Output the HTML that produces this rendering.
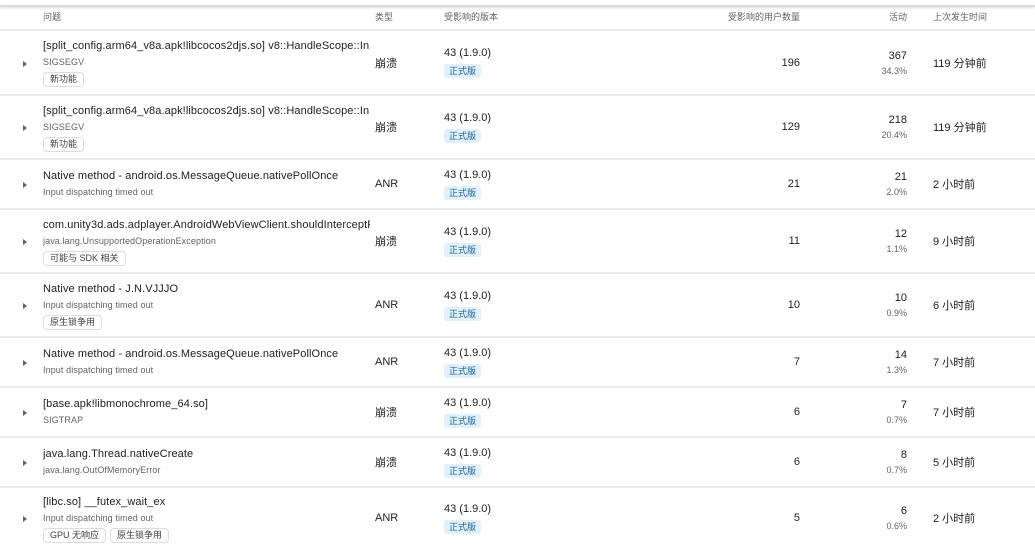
<!DOCTYPE html>
<html><head><meta charset="utf-8"><style>
*{margin:0;padding:0;box-sizing:border-box}
body{width:1035px;height:546px;overflow:hidden;background:#fff;font-family:"Liberation Sans","Noto Sans CJK SC",sans-serif;color:#202124;position:relative}
.top{position:absolute;left:0;right:0;top:5px;height:2px;background:#dcdcdc;box-shadow:0 1px 2px rgba(0,0,0,.15)}
.hd{position:absolute;top:7px;height:23px;font-size:9px;color:#5f6368;line-height:20px}
.row{position:absolute;left:0;width:1035px;border-top:2px solid #ebebeb}
.c{position:absolute;top:0;bottom:0;display:flex;flex-direction:column;justify-content:center}
.tri{left:22px;width:6px;align-items:center}
.tri span{width:0;height:0;border-left:4px solid #5f6368;border-top:3.5px solid transparent;border-bottom:3.5px solid transparent;margin-top:2px}
.iss{left:43px;width:327px;overflow:hidden;white-space:nowrap}
.t{font-size:11px;line-height:16px;color:#202124;letter-spacing:0.1px}
.s{font-size:9px;line-height:16px;color:#5f6368;letter-spacing:0.1px}
.chips{display:flex;gap:4px;margin-top:2px}
.chip{display:inline-block;border:1px solid #dadce0;border-radius:4px;font-size:9px;line-height:13px;padding:0 6px;color:#3c4043;height:15px}
.typ{left:375px;font-size:11px}
.ver{left:444px;font-size:11px}
.ver .b{display:inline-block;background:#e1f0fb;color:#1967a0;font-size:9px;line-height:14px;padding:0 5px;border-radius:3px;margin-top:5px;align-self:flex-start}
.usr{right:235px;font-size:11px;text-align:right;align-items:flex-end}
.act{right:128px;text-align:right;align-items:flex-end}
.act .n{font-size:11px;line-height:16px}
.act .p{font-size:9px;line-height:14px;color:#5f6368}
.last{left:933px;font-size:11px}
</style></head><body>
<div class="top"></div>
<div class="hd" style="left:43px">问题</div>
<div class="hd" style="left:375px">类型</div>
<div class="hd" style="left:444px">受影响的版本</div>
<div class="hd" style="right:235px">受影响的用户数量</div>
<div class="hd" style="right:128px">活动</div>
<div class="hd" style="left:933px">上次发生时间</div>

<div class="row" style="top:29px;height:65px"><div class="c tri"><span></span></div><div class="c iss"><div class="t">[split_config.arm64_v8a.apk!libcocos2djs.so] v8::HandleScope::Initialize</div><div class="s">SIGSEGV</div><div class="chips"><span class="chip">新功能</span></div></div><div class="c typ">崩溃</div><div class="c ver"><div>43 (1.9.0)</div><span class="b">正式版</span></div><div class="c usr">196</div><div class="c act"><div class="n">367</div><div class="p">34.3%</div></div><div class="c last">119 分钟前</div></div>

<div class="row" style="top:94px;height:64px"><div class="c tri"><span></span></div><div class="c iss"><div class="t">[split_config.arm64_v8a.apk!libcocos2djs.so] v8::HandleScope::Initialize</div><div class="s">SIGSEGV</div><div class="chips"><span class="chip">新功能</span></div></div><div class="c typ">崩溃</div><div class="c ver"><div>43 (1.9.0)</div><span class="b">正式版</span></div><div class="c usr">129</div><div class="c act"><div class="n">218</div><div class="p">20.4%</div></div><div class="c last">119 分钟前</div></div>

<div class="row" style="top:158px;height:50px"><div class="c tri"><span></span></div><div class="c iss"><div class="t">Native method - android.os.MessageQueue.nativePollOnce</div><div class="s">Input dispatching timed out</div></div><div class="c typ">ANR</div><div class="c ver"><div>43 (1.9.0)</div><span class="b">正式版</span></div><div class="c usr">21</div><div class="c act"><div class="n">21</div><div class="p">2.0%</div></div><div class="c last">2 小时前</div></div>

<div class="row" style="top:208px;height:64px"><div class="c tri"><span></span></div><div class="c iss"><div class="t">com.unity3d.ads.adplayer.AndroidWebViewClient.shouldInterceptRequest</div><div class="s">java.lang.UnsupportedOperationException</div><div class="chips"><span class="chip">可能与 SDK 相关</span></div></div><div class="c typ">崩溃</div><div class="c ver"><div>43 (1.9.0)</div><span class="b">正式版</span></div><div class="c usr">11</div><div class="c act"><div class="n">12</div><div class="p">1.1%</div></div><div class="c last">9 小时前</div></div>

<div class="row" style="top:272px;height:64px"><div class="c tri"><span></span></div><div class="c iss"><div class="t">Native method - J.N.VJJJO</div><div class="s">Input dispatching timed out</div><div class="chips"><span class="chip">原生锁争用</span></div></div><div class="c typ">ANR</div><div class="c ver"><div>43 (1.9.0)</div><span class="b">正式版</span></div><div class="c usr">10</div><div class="c act"><div class="n">10</div><div class="p">0.9%</div></div><div class="c last">6 小时前</div></div>

<div class="row" style="top:336px;height:50px"><div class="c tri"><span></span></div><div class="c iss"><div class="t">Native method - android.os.MessageQueue.nativePollOnce</div><div class="s">Input dispatching timed out</div></div><div class="c typ">ANR</div><div class="c ver"><div>43 (1.9.0)</div><span class="b">正式版</span></div><div class="c usr">7</div><div class="c act"><div class="n">14</div><div class="p">1.3%</div></div><div class="c last">7 小时前</div></div>

<div class="row" style="top:386px;height:50px"><div class="c tri"><span></span></div><div class="c iss"><div class="t">[base.apk!libmonochrome_64.so]</div><div class="s">SIGTRAP</div></div><div class="c typ">崩溃</div><div class="c ver"><div>43 (1.9.0)</div><span class="b">正式版</span></div><div class="c usr">6</div><div class="c act"><div class="n">7</div><div class="p">0.7%</div></div><div class="c last">7 小时前</div></div>

<div class="row" style="top:436px;height:50px"><div class="c tri"><span></span></div><div class="c iss"><div class="t">java.lang.Thread.nativeCreate</div><div class="s">java.lang.OutOfMemoryError</div></div><div class="c typ">崩溃</div><div class="c ver"><div>43 (1.9.0)</div><span class="b">正式版</span></div><div class="c usr">6</div><div class="c act"><div class="n">8</div><div class="p">0.7%</div></div><div class="c last">5 小时前</div></div>

<div class="row" style="top:486px;height:62px"><div class="c tri"><span></span></div><div class="c iss"><div class="t">[libc.so] __futex_wait_ex</div><div class="s">Input dispatching timed out</div><div class="chips"><span class="chip">GPU 无响应</span><span class="chip">原生锁争用</span></div></div><div class="c typ">ANR</div><div class="c ver"><div>43 (1.9.0)</div><span class="b">正式版</span></div><div class="c usr">5</div><div class="c act"><div class="n">6</div><div class="p">0.6%</div></div><div class="c last">2 小时前</div></div>
</body></html>
